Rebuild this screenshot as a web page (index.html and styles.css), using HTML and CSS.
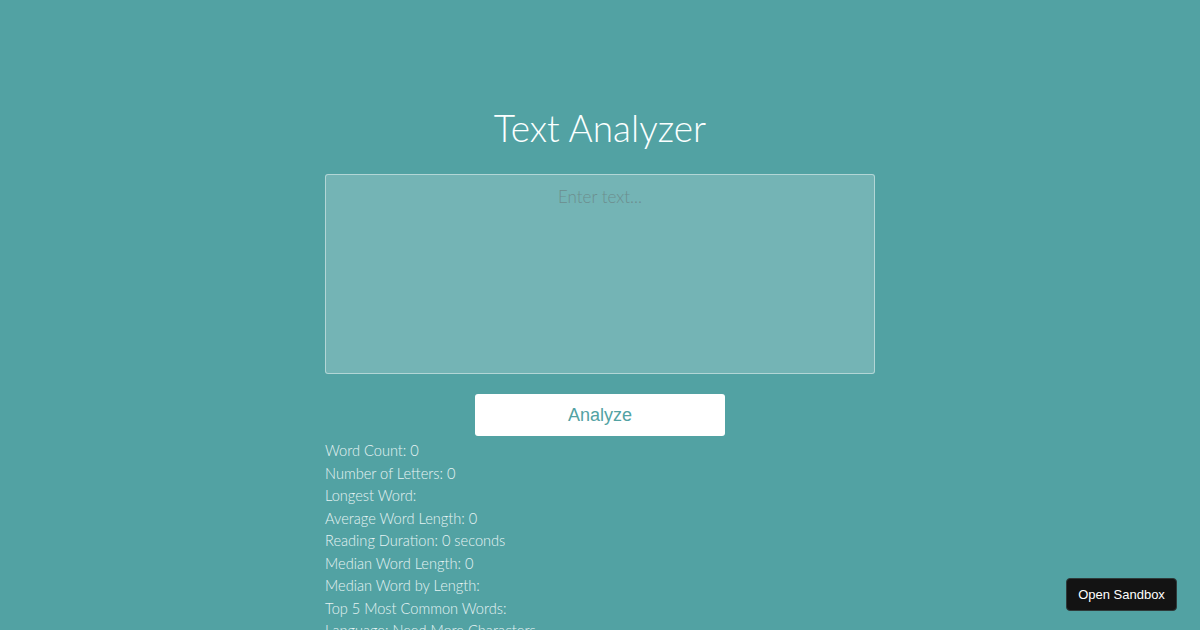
FILE: index.html
```html
<!DOCTYPE html>
<html>
<head>
<meta charset="utf-8">
<link rel="stylesheet" href="styles.css">
</head>
<body>
<main class="app">
  <h1 class="title">Text Analyzer</h1>
  <textarea class="input" placeholder="Enter text..."></textarea>
  <button class="analyze">Analyze</button>
  <ul class="stats">
    <li>Word Count: 0</li>
    <li>Number of Letters: 0</li>
    <li>Longest Word:</li>
    <li>Average Word Length: 0</li>
    <li>Reading Duration: 0 seconds</li>
    <li>Median Word Length: 0</li>
    <li>Median Word by Length:</li>
    <li>Top 5 Most Common Words:</li>
    <li>Language: Need More Characters</li>
  </ul>
</main>
<a class="sandbox">Open Sandbox</a>
</body>
</html>
```
FILE: styles.css
```css
html, body {
  margin: 0;
  padding: 0;
  background: #52a2a3;
  height: 100%;
  overflow: hidden;
}
body {
  font-family: Lato, "Open Sans", sans-serif;
  font-weight: 300;
  color: #e6f3f3;
}
.app {
  width: 550px;
  margin: 0 auto;
  padding-top: 104px;
  display: flex;
  flex-direction: column;
  align-items: center;
}
.title {
  margin: 0 0 22px;
  font-size: 37px;
  font-weight: 300;
  line-height: 48px;
  color: #fbffff;
}
.input {
  box-sizing: border-box;
  width: 550px;
  height: 200px;
  resize: none;
  background: rgba(255,255,255,0.2);
  border: 1px solid rgba(255,255,255,0.45);
  border-radius: 3px;
  padding: 11px 12px;
  font-family: Lato, sans-serif;
  font-weight: 300;
  font-size: 17px;
  text-align: center;
  color: #fff;
  outline: none;
}
.input::placeholder {
  color: #6c8e8e;
}
.analyze {
  margin-top: 20px;
  width: 250px;
  height: 42px;
  background: #fff;
  border: none;
  border-radius: 3px;
  font-family: "Liberation Sans", Arial, sans-serif;
  font-size: 18px;
  color: #52a2a3;
}
.stats {
  align-self: stretch;
  list-style: none;
  margin: 4px 0 0;
  padding: 0;
  font-size: 14.6px;
  line-height: 22.5px;
}
.sandbox {
  position: fixed;
  right: 23px;
  bottom: 19px;
  box-sizing: border-box;
  width: 111px;
  height: 33px;
  display: flex;
  align-items: center;
  justify-content: center;
  background: #131313;
  border: 1px solid #2f3a3a;
  border-radius: 4px;
  color: #fff;
  font-family: "Liberation Sans", Arial, sans-serif;
  font-size: 13px;
  font-weight: 400;
}
```
